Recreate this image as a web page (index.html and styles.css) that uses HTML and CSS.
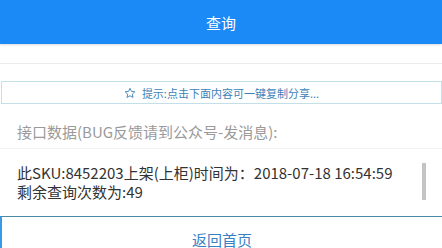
FILE: index.html
```html
<!DOCTYPE html>
<html lang="zh-CN">
<head>
<meta charset="utf-8">
<link rel="stylesheet" href="styles.css">
</head>
<body>
<div class="header">查询</div>
<div class="gap-row"></div>
<div class="tip">
  <svg class="star" width="12" height="12" viewBox="0 0 24 24"><path d="M12 2.5l2.9 6.2 6.8.8-5 4.7 1.3 6.7L12 17.5l-6 3.4 1.3-6.7-5-4.7 6.8-.8z" fill="none" stroke="#3c7fb8" stroke-width="1.8" stroke-linejoin="round"/></svg>
  <span>提示:点击下面内容可一键复制分享...</span>
</div>
<div class="section-title">接口数据(BUG反馈请到公众号-发消息):</div>
<div class="content">
  <div class="result">此SKU:8452203上架(上柜)时间为：2018-07-18 16:54:59<br>剩余查询次数为:49</div>
  <div class="scrollbar"></div>
</div>
<div class="back">返回首页</div>
</body>
</html>
```
FILE: styles.css
```css
html, body {
  margin: 0;
  padding: 0;
  background: #ffffff;
  font-family: "Noto Sans CJK SC", "Noto Sans", sans-serif;
  width: 442px;
  height: 248px;
  overflow: hidden;
}
.header {
  height: 44px;
  background: #1b8af6;
  color: #ffffff;
  font-size: 15px;
  display: flex;
  align-items: center;
  justify-content: center;
  box-shadow: 0 1px 2px rgba(0, 0, 0, 0.15);
}
.gap-row {
  height: 19px;
  border-bottom: 1px solid #ececec;
  margin-bottom: 17px;
}
.tip {
  margin-left: 1px;
  height: 21px;
  border: 1px solid #c3e0e8;
  display: flex;
  align-items: center;
  justify-content: center;
  gap: 6px;
  font-size: 11px;
  color: #3c7fb8;
}
.star {
  display: block;
}
.section-title {
  margin-top: 18px;
  padding: 0 0 6px 17px;
  line-height: 20px;
  font-size: 15px;
  color: #9a9a9a;
  border-bottom: 1px solid #f3f3f3;
}
.content {
  display: flex;
  justify-content: space-between;
  padding: 14px 16px 15px 17px;
}
.result {
  font-size: 15px;
  line-height: 19px;
  color: #333333;
}
.scrollbar {
  width: 4px;
  height: 37px;
  background: #c4c4c4;
}
.back {
  height: 40px;
  border-top: 1px solid #4a8ca6;
  border-left: 2px solid #3b9ae6;
  color: #3a80c2;
  font-size: 15px;
  display: flex;
  justify-content: center;
  padding-top: 13px;
  line-height: 20px;
  box-sizing: border-box;
}
```
